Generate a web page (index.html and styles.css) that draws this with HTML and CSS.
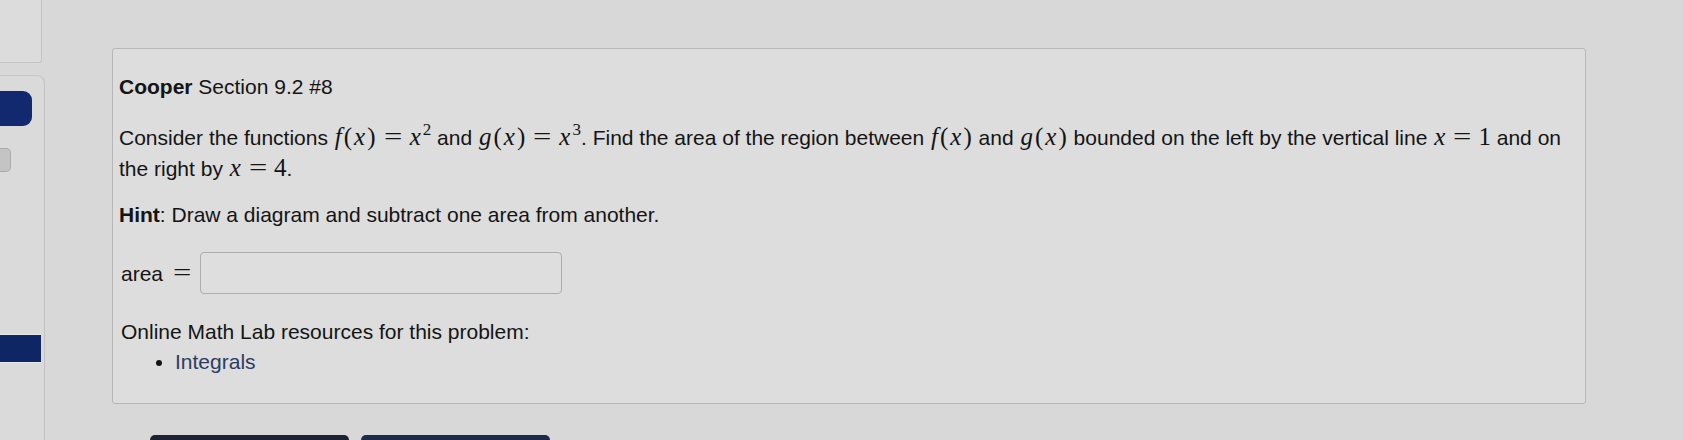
FILE: index.html
```html
<!DOCTYPE html>
<html lang="en">
<head>
<meta charset="utf-8">
<title>Cooper Section 9.2 #8</title>
<link rel="stylesheet" href="styles.css">
</head>
<body>
<div class="page">
  <aside class="side">
    <div class="side-top"></div>
    <div class="side-panel">
      <div class="side-btn-primary"></div>
      <div class="side-btn-grey"></div>
      <div class="side-btn-bar"></div>
    </div>
  </aside>
  <main class="content">
    <section class="problem">
      <h2 class="title"><b>Cooper</b> Section 9.2 #8</h2>
      <p class="text"><span>Consider the functions</span> <span class="m"><i>f</i><span class="mo">(</span><i>x</i><span class="mo">)</span><span class="eq">=</span><i>x</i><sup>2</sup></span> <span>and</span> <span class="m"><i>g</i><span class="mo">(</span><i>x</i><span class="mo">)</span><span class="eq">=</span><i>x</i><sup>3</sup></span><span>. Find the area of the region between</span> <span class="m"><i>f</i><span class="mo">(</span><i>x</i><span class="mo">)</span></span> <span>and</span> <span class="m"><i>g</i><span class="mo">(</span><i>x</i><span class="mo">)</span></span> <span>bounded on the left by the vertical line</span> <span class="m"><i>x</i><span class="eq">=</span><span class="mn">1</span></span> <span>and on</span> <span>the right by</span> <span class="m"><i>x</i><span class="eq">=</span><span class="mn">4</span></span><span>.</span></p>
      <p class="text hint"><b>Hint</b>: Draw a diagram and subtract one area from another.</p>
      <div class="answer">
        <span class="answer-label">area <span class="m"><span class="eq">=</span></span></span>
        <input class="answer-input" type="text" aria-label="area">
      </div>
      <div class="resources">
        <div class="resources-title">Online Math Lab resources for this problem:</div>
        <ul class="resources-list">
          <li><a href="#">Integrals</a></li>
        </ul>
      </div>
    </section>
    <div class="bottom-buttons">
      <div class="btn btn-dark"></div>
      <div class="btn btn-navy"></div>
    </div>
  </main>
</div>
</body>
</html>
```
FILE: styles.css
```css
* { box-sizing: border-box; }
html, body { margin: 0; padding: 0; }
body {
  background: #d7d8d7;
  font-family: "Liberation Sans", Arial, sans-serif;
  color: #141414;
  width: 1683px;
  height: 440px;
  overflow: hidden;
}
.page {
  display: flex;
  height: 440px;
}
.side {
  width: 47px;
  flex: none;
  display: flex;
  flex-direction: column;
}
.side-top {
  width: 42px;
  height: 63px;
  background: #dbdcdb;
  border-right: 1px solid #c4c5c4;
  border-bottom: 1px solid #c4c5c4;
  border-bottom-right-radius: 3px;
}
.side-panel {
  margin-top: 12px;
  width: 45px;
  flex: 1;
  background: #d9dad9;
  border-top: 1px solid #c6c7c6;
  border-right: 1px solid #c0c1c0;
  border-top-right-radius: 8px;
  display: flex;
  flex-direction: column;
}
.side-btn-primary {
  margin-top: 15px;
  width: 32px;
  height: 35px;
  background: #12286f;
  border-radius: 0 9px 9px 0;
}
.side-btn-grey {
  margin-top: 22px;
  width: 11px;
  height: 24px;
  background: #c3c4c3;
  border: 1px solid #a9aaa9;
  border-left: none;
  border-radius: 0 5px 5px 0;
}
.side-btn-bar {
  margin-top: 162px;
  width: 41px;
  height: 29px;
  background: #0f2664;
  border-top: 1px solid #e8e8e8;
  border-bottom: 1px solid #e8e8e8;
}
.content {
  padding-left: 65px;
  padding-top: 48px;
  flex: none;
  width: 1636px;
}
.problem {
  width: 1474px;
  height: 356px;
  background: #dcdddc;
  border: 1px solid #b6b7b6;
  border-radius: 3px;
  padding: 26px 7px 0 6px;
  font-size: 21px;
}
.title {
  margin: 0;
  font-size: 21px;
  font-weight: normal;
  line-height: 24px;
}
.title b { font-weight: bold; }
.text {
  margin: 0;
  line-height: 31px;
}
.problem > .text:first-of-type { margin-top: 23px; }
.hint { margin-top: 15px; }
.m {
  font-family: "Liberation Serif", "DejaVu Serif", serif;
  font-size: 25px;
  line-height: 1;
  white-space: nowrap;
}
.m i { font-style: italic; padding: 0 1px; }
.mo { font-style: normal; padding: 0 1px; }
.mn { font-style: normal; }
.eq {
  display: inline-block;
  margin: 0 9px;
  font-style: normal;
  transform: scaleX(1.3);
}
.m sup {
  font-size: 17px;
  line-height: 0;
  vertical-align: 10px;
  margin-left: 1px;
}
.answer {
  margin-top: 22px;
  display: flex;
  align-items: center;
  gap: 11px;
  padding-left: 2px;
}
.answer-label { white-space: nowrap; }
.answer-label .eq { margin: 0 0 0 6px; }
.answer-input {
  width: 362px;
  height: 42px;
  background: #dddedd;
  border: 1px solid #acadac;
  border-radius: 4px;
  margin: 0;
}
.resources {
  margin-top: 23px;
  line-height: 30px;
  padding-left: 2px;
}
.resources-list {
  margin: 0;
  padding-left: 54px;
}
.resources-list a {
  color: #2c3c62;
  text-decoration: none;
}
.bottom-buttons {
  display: flex;
  gap: 12px;
  margin-top: 31px;
  padding-left: 38px;
}
.btn {
  height: 20px;
  border-radius: 5px 5px 0 0;
}
.btn-dark { width: 199px; background: #1b2231; }
.btn-navy { width: 189px; background: #1d2a4b; }
```
